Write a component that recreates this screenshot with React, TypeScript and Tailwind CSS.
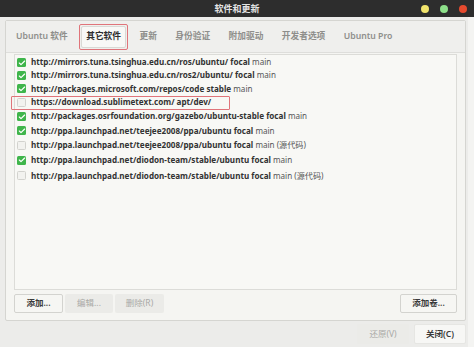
import { Check } from 'lucide-react'

const font = { fontFamily: '"Noto Sans", "Noto Sans CJK SC", sans-serif' }

const tabs = ['Ubuntu 软件', '其它软件', '更新', '身份验证', '附加驱动', '开发者选项', 'Ubuntu Pro']

const sources = [
  { on: true, url: 'http://mirrors.tuna.tsinghua.edu.cn/ros/ubuntu/ focal', rest: 'main', h: 'h-[13px]' },
  { on: true, url: 'http://mirrors.tuna.tsinghua.edu.cn/ros2/ubuntu/ focal', rest: 'main', h: 'h-[13px]' },
  { on: true, url: 'http://packages.microsoft.com/repos/code stable', rest: 'main', h: 'h-[13.5px]' },
  { on: false, url: 'https://download.sublimetext.com/ apt/dev/', rest: '', h: 'h-[14px]', marked: true },
  { on: true, url: 'http://packages.osrfoundation.org/gazebo/ubuntu-stable focal', rest: 'main', h: 'h-[14px]' },
  { on: true, url: 'http://ppa.launchpad.net/teejee2008/ppa/ubuntu focal', rest: 'main', h: 'h-[14.5px]' },
  { on: false, url: 'http://ppa.launchpad.net/teejee2008/ppa/ubuntu focal', rest: 'main (源代码)', h: 'h-[14.5px]' },
  { on: true, url: 'http://ppa.launchpad.net/diodon-team/stable/ubuntu focal', rest: 'main', h: 'h-[15px]' },
  { on: false, url: 'http://ppa.launchpad.net/diodon-team/stable/ubuntu focal', rest: 'main (源代码)', h: 'h-[16.5px]' },
]

function CheckBox({ on }: { on: boolean }) {
  if (on) {
    return (
      <span className="flex h-[9px] w-[9px] shrink-0 items-center justify-center rounded-[1.5px] bg-[#3fb54b]">
        <Check size={8} strokeWidth={3.5} className="text-white" />
      </span>
    )
  }
  return <span className="h-[9px] w-[9px] shrink-0 rounded-[1.5px] border border-[#d2d2ce] bg-[#f2f2ef]" />
}

function Btn({ label, disabled, className }: { label: string; disabled?: boolean; className: string }) {
  return (
    <div
      className={
        'flex h-[19px] items-center justify-center rounded-[2px] text-[8.5px] ' +
        (disabled
          ? 'bg-[#ebebe8] text-[#a9a9a6]'
          : 'border border-[#d3d3cf] bg-[#f6f6f3] font-semibold text-[#3a3a3a]') +
        ' ' +
        className
      }
    >
      {label}
    </div>
  )
}

export default function App() {
  return (
    <div style={font} className="flex h-[347px] w-[474px] flex-col overflow-hidden bg-[#ececea]">
      <div className="relative flex h-[17px] shrink-0 items-center justify-center bg-[#2d2d2d]">
        <span className="text-[9px] font-semibold text-[#e4e4e4]">软件和更新</span>
        <div className="absolute right-[7px] top-[5px] flex gap-[11px]">
          <span className="h-[8px] w-[8px] rounded-full bg-[#f1e46c]" />
          <span className="h-[8px] w-[8px] rounded-full bg-[#8de08a]" />
          <span className="h-[8px] w-[8px] rounded-full bg-[#e64a2e]" />
        </div>
      </div>

      <div className="flex flex-1 flex-col border-r-[6px] border-[#f4f4f2] pl-[5px] pr-[2px] pt-[3px]">
        <div className="flex h-[301px] flex-col rounded-[2px] border border-[#d5d5d1] bg-[#f5f5f2]">
          <div className="flex h-[32px] items-center gap-[18.5px] border-b border-[#dededb] bg-[#efefed] pl-[10px]">
            {tabs.map(t => {
              const active = t === '其它软件'
              return (
                <div
                  key={t}
                  className={
                    'relative flex h-[22px] items-center text-[8.7px] ' +
                    (active ? 'font-bold text-[#2e2e2e]' : 'font-semibold text-[#8e8e8b]')
                  }
                >
                  {active && (
                    <span className="absolute -inset-x-[5px] inset-y-0 rounded-[2px] border border-[#d9d9d5] bg-[#f8f8f6]" />
                  )}
                  {active && (
                    <span className="absolute -inset-x-[7px] -inset-y-[2px] rounded-[2px] border-[1.5px] border-[#e0747a]" />
                  )}
                  <span className="relative">{t}</span>
                </div>
              )
            })}
          </div>

          <div className="flex flex-1 flex-col px-[8px] pt-[1px]">
            <div className="flex h-[236px] flex-col border border-[#dcdcd8] bg-[#f8f8f5] pt-[1px]">
              {sources.map((s, i) => (
                <div key={i} className={'relative flex items-center gap-[5px] pl-[2px] ' + s.h}>
                  {s.marked && (
                    <span className="absolute -left-[4px] top-[0px] h-[14px] w-[219px] rounded-[1px] border-[1.5px] border-[#e0747a]" />
                  )}
                  <CheckBox on={s.on} />
                  <span className="whitespace-nowrap text-[8.1px] leading-none text-[#333]">
                    <span className="font-bold">{s.url}</span>
                    {s.rest && <span className="text-[#555]"> {s.rest}</span>}
                  </span>
                </div>
              ))}
            </div>

            <div className="mt-[4px] flex items-center gap-[2px]">
              <Btn label="添加..." className="w-[49px]" />
              <Btn label="编辑..." disabled className="w-[48px]" />
              <Btn label="删除(R)" disabled className="w-[49px]" />
              <div className="flex-1" />
              <Btn label="添加卷..." className="w-[57px]" />
            </div>
          </div>
        </div>

        <div className="mt-[3px] flex justify-end gap-[5px] pr-[0px]">
          <Btn label="还原(V)" disabled className="h-[20px] w-[52px]" />
          <Btn label="关闭(C)" className="h-[20px] w-[52px] border-[#e6e6e3] bg-[#f7f7f5]" />
        </div>
      </div>
    </div>
  )
}
